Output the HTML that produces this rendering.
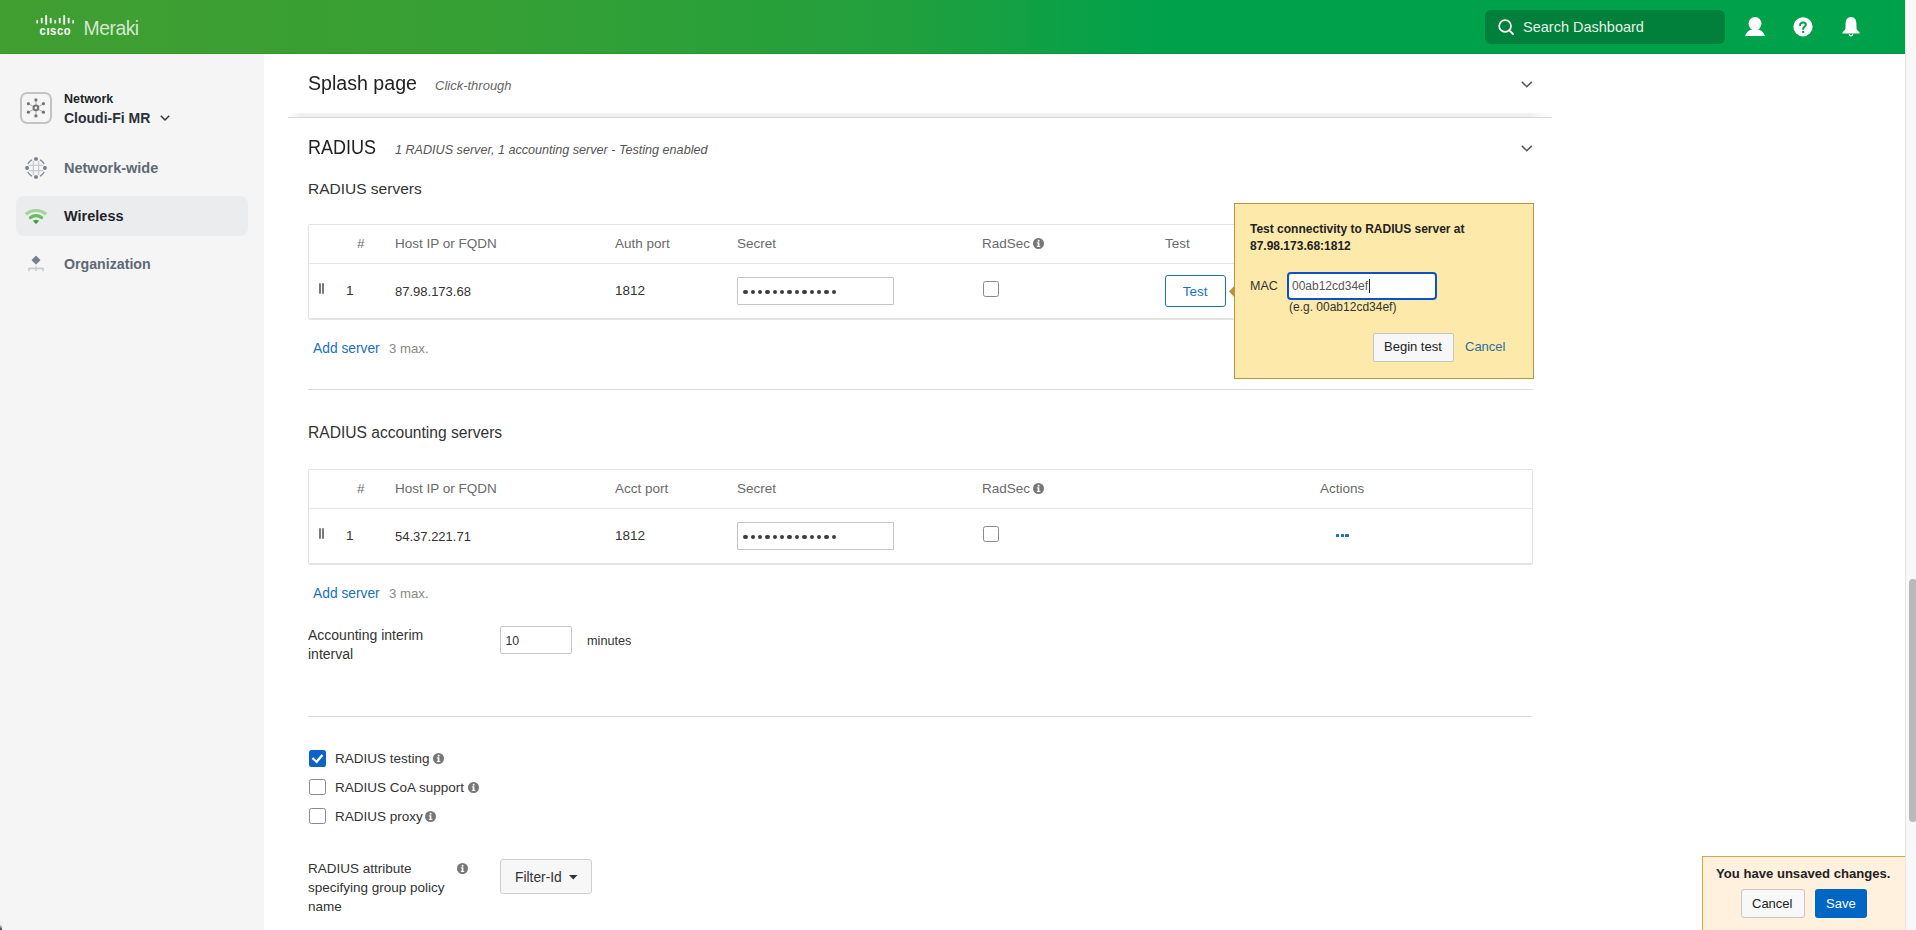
<!DOCTYPE html>
<html><head><meta charset="utf-8"><style>
*{box-sizing:border-box;margin:0;padding:0}
html,body{width:1916px;height:930px;overflow:hidden;background:#fff;font-family:"Liberation Sans",sans-serif;color:#222}
.abs{position:absolute}
#hdr{position:absolute;left:0;top:0;width:1905px;height:54px;background:linear-gradient(90deg,#419e31 0%,#36a034 25%,#22a03d 47%,#00a14b 61%,#00a14b 100%);border-bottom:1px solid rgba(0,60,0,0.09)}
#side{position:absolute;left:0;top:54px;width:264px;height:876px;background:#f5f5f5}
#scroll{position:absolute;left:1905px;top:0;width:11px;height:930px;background:#f8f8f8;border-left:1px solid #e6e6e6}
#thumb{position:absolute;left:1909px;top:579px;width:8px;height:242.5px;border-radius:4px;background:#b9b9b9}
.t{position:absolute;white-space:nowrap;line-height:1}
.hr{position:absolute;height:1px;background:#dcdcdc}
</style></head><body>

<div id="hdr">
 <svg class="abs" style="left:35.7px;top:14px" width="40" height="22" viewBox="0 0 40 22">
  <g fill="#fff">
   <rect x="0.3" y="6" width="1.8" height="3.6" rx="0.9"/>
   <rect x="4.8" y="3.7" width="1.8" height="5.8" rx="0.9"/>
   <rect x="9.3" y="1" width="1.8" height="9.8" rx="0.9"/>
   <rect x="13.8" y="3.7" width="1.8" height="5.8" rx="0.9"/>
   <rect x="18.3" y="6" width="1.8" height="3.6" rx="0.9"/>
   <rect x="22.8" y="3.7" width="1.8" height="5.8" rx="0.9"/>
   <rect x="27.3" y="1" width="1.8" height="9.8" rx="0.9"/>
   <rect x="31.8" y="3.7" width="1.8" height="5.8" rx="0.9"/>
   <rect x="36.3" y="6" width="1.8" height="3.6" rx="0.9"/>
  </g>
  <text x="3.6" y="17.3" transform="scale(1,1.2)" font-family="Liberation Sans" font-weight="bold" font-size="11.2" textLength="31" lengthAdjust="spacing" fill="#fff">c&#305;sco</text>
 </svg>
 <div class="t" style="left:83.5px;top:19px;font-size:19.4px;letter-spacing:-0.5px;color:rgba(255,255,255,0.78)">Meraki</div>
 <div class="abs" style="left:1485px;top:10px;width:240px;height:34px;border-radius:6px;background:#00803a"></div>
 <svg class="abs" style="left:1497px;top:18px" width="18" height="18" viewBox="0 0 18 18"><circle cx="8.1" cy="8" r="5.9" fill="none" stroke="#fff" stroke-width="1.7"/><path d="M12.3 12.3 L16 16" stroke="#fff" stroke-width="1.8" stroke-linecap="round"/></svg>
 <div class="t" style="left:1523px;top:20px;font-size:14.5px;color:#e6f2e8">Search Dashboard</div>
 <svg class="abs" style="left:1744px;top:16px" width="22" height="22" viewBox="0 0 22 22"><circle cx="11" cy="7.6" r="6.5" fill="#fff"/><path d="M1 20 C2.5 15.5 6.5 13 11 13 C15.5 13 19.5 15.5 21 20 Z" fill="#fff"/><path d="M3 13.6 C5.5 12 8 11.5 11 11.5" fill="none"/></svg>
 <svg class="abs" style="left:1792px;top:16px" width="22" height="22" viewBox="0 0 22 22"><circle cx="11" cy="10.8" r="9.6" fill="#fff"/><path d="M8.1 9.2 C8.1 7.3 9.4 6.6 11 6.6 C12.7 6.6 13.8 7.5 13.8 8.9 C13.8 10.7 11.2 10.8 11.2 12.7 L11.2 12.9" fill="none" stroke="#00a14b" stroke-width="2" stroke-linecap="round"/><rect x="10.1" y="14.9" width="2.1" height="2" fill="#00a14b"/></svg>
 <svg class="abs" style="left:1840px;top:16px" width="22" height="22" viewBox="0 0 22 22"><path d="M11 1 C7.2 1 5.6 4.2 5.6 8 L5.4 13.3 L2.6 16.3 C2.1 16.9 2.4 17.6 3.2 17.6 L18.8 17.6 C19.6 17.6 19.9 16.9 19.4 16.3 L16.6 13.3 L16.4 8 C16.4 4.2 14.8 1 11 1 Z" fill="#fff"/><path d="M9.2 18.2 C9.4 19.4 10.1 19.9 11 19.9 C11.9 19.9 12.6 19.4 12.8 18.2" fill="none" stroke="#fff" stroke-width="1.2"/></svg>
</div>


<div id="side">
 <div class="abs" style="left:20px;top:38px;width:32px;height:32px;border:2px solid #c3c3c3;border-radius:7px"></div>
 <svg class="abs" style="left:24px;top:42px" width="24" height="24" viewBox="0 0 24 24">
  <g stroke="#9a9a9a" stroke-width="0.8"><path d="M12 4V20M4.5 7.8L19.5 16.2M4.5 16.2L19.5 7.8"/></g>
  <circle cx="11.9" cy="11.9" r="2.3" fill="#f5f5f5" stroke="#747474" stroke-width="2"/>
  <g fill="#747474"><circle cx="11.9" cy="3.9" r="1.6"/><circle cx="11.9" cy="19.9" r="1.6"/><circle cx="4.4" cy="7.7" r="1.6"/><circle cx="19.4" cy="7.7" r="1.6"/><circle cx="4.4" cy="16.2" r="1.6"/><circle cx="19.4" cy="16.2" r="1.6"/></g>
 </svg>
 <div class="t" style="left:64px;top:39px;font-size:12.5px;font-weight:bold;color:#202428">Network</div>
 <div class="t" style="left:64px;top:57px;font-size:14px;font-weight:bold;color:#2b3138">Cloudi-Fi MR</div>
 <svg class="abs" style="left:159px;top:60px" width="12" height="8" viewBox="0 0 12 8"><path d="M1.8 1.8L6 6L10.2 1.8" fill="none" stroke="#333" stroke-width="1.5"/></svg>
 <svg class="abs" style="left:24px;top:102px" width="24" height="24" viewBox="0 0 24 24">
  <g fill="none" stroke="#c6cad0" stroke-width="1.3"><path d="M9.4 5V19M14.6 5V19M5 9.4H19M5 14.6H19"/></g>
  <g fill="none" stroke="#858c94" stroke-width="1.5" stroke-linecap="round">
   <path d="M4.2 7.5 A9 9 0 0 1 7.5 4.2 M16.5 4.2 A9 9 0 0 1 19.8 7.5 M19.8 16.5 A9 9 0 0 1 16.5 19.8 M7.5 19.8 A9 9 0 0 1 4.2 16.5"/>
  </g>
  <g fill="#7a828b"><rect x="10.1" y="1.2" width="3.8" height="3.6" rx="1.4"/><rect x="10.1" y="19.2" width="3.8" height="3.6" rx="1.4"/><rect x="1.3" y="10.1" width="3.6" height="3.8" rx="1.4"/><rect x="19.1" y="10.1" width="3.6" height="3.8" rx="1.4"/></g>
 </svg>
 <div class="t" style="left:64px;top:107px;font-size:14.5px;font-weight:bold;color:#5f6973">Network-wide</div>
 <div class="abs" style="left:16px;top:142px;width:232px;height:40px;border-radius:8px;background:#ebecee"></div>
 <svg class="abs" style="left:24px;top:150px" width="24" height="24" viewBox="0 0 24 24">
  <path d="M1.9 10.24 A15.5 15.5 0 0 1 22.1 10.24" fill="none" stroke="#a3d39a" stroke-width="3.2"/>
  <path d="M6.4 13.6 A10.1 10.1 0 0 1 17.6 13.6" fill="none" stroke="#6abd5e" stroke-width="3.2" stroke-linecap="round"/>
  <path d="M12 19.7 L9.4 16.8 A7 7 0 0 1 14.6 16.8 Z" fill="#3a9f32" stroke="#3a9f32" stroke-width="0.8" stroke-linejoin="round"/>
 </svg>
 <div class="t" style="left:64px;top:155px;font-size:14.5px;font-weight:bold;color:#1f2328">Wireless</div>
 <svg class="abs" style="left:24px;top:196px" width="24" height="24" viewBox="0 0 24 24">
  <path d="M12 5.5L16.2 9.7Q16.6 10.1 16.2 10.5L12.4 14.3Q12 14.7 11.6 14.3L7.8 10.5Q7.4 10.1 7.8 9.7L11.6 5.9Q12 5.5 12.4 5.9Z" fill="#78808a"/>
  <g fill="#c6cbd0"><rect x="11.3" y="16.2" width="1.5" height="2"/><rect x="4.2" y="17.6" width="15.6" height="1.7"/><rect x="4.2" y="19" width="1.6" height="2.1"/><rect x="11.3" y="19" width="1.5" height="2.1"/><rect x="18.2" y="19" width="1.6" height="2.1"/></g>
 </svg>
 <div class="t" style="left:64px;top:203px;font-size:14.2px;font-weight:bold;color:#5f6973">Organization</div>
</div>

<div class="t" style="left:308px;top:73px;font-size:20px;color:#222;transform:scaleX(0.98);transform-origin:0 0">Splash page</div><div class="t" style="left:435px;top:79px;font-size:13px;color:#666;font-style:italic">Click-through</div><svg class="abs" style="left:1520px;top:79.5px" width="14" height="9" viewBox="0 0 14 9"><path d="M1.9 1.9L6.8 6.8L11.7 1.9" fill="none" stroke="#555" stroke-width="1.5"/></svg><div class="abs" style="left:288px;top:112px;width:1264px;height:5px;background:linear-gradient(180deg,rgba(0,0,0,0) 0%,rgba(0,0,0,0.075) 55%,rgba(0,0,0,0.05) 100%);-webkit-mask-image:linear-gradient(90deg,transparent 0,#000 12px,#000 1240px,transparent 1264px)"></div><div class="hr" style="left:288px;top:117px;width:1264px;background:#d8d8d8"></div><div class="t" style="left:308px;top:137px;font-size:20px;color:#222;transform:scaleX(0.9);transform-origin:0 0">RADIUS</div><div class="t" style="left:395px;top:144px;font-size:12.6px;color:#555;font-style:italic">1 RADIUS server, 1 accounting server - Testing enabled</div><svg class="abs" style="left:1520px;top:143.5px" width="14" height="9" viewBox="0 0 14 9"><path d="M1.9 1.9L6.8 6.8L11.7 1.9" fill="none" stroke="#555" stroke-width="1.5"/></svg><div class="t" style="left:308px;top:181px;font-size:15.5px;color:#333;">RADIUS servers</div><div class="abs" style="left:308px;top:224px;width:1225px;height:96px;border:1px solid #e3e3e3;border-bottom:2px solid #e4e4e4;border-radius:2px"></div><div class="hr" style="left:309px;top:263px;width:1223px;background:#e6e6e6"></div><div class="t" style="left:357px;top:237px;font-size:13.5px;color:#6a6a6a;">#</div><div class="t" style="left:395px;top:237px;font-size:13.5px;color:#6a6a6a;">Host IP or FQDN</div><div class="t" style="left:615px;top:237px;font-size:13.5px;color:#6a6a6a;">Auth port</div><div class="t" style="left:737px;top:237px;font-size:13.5px;color:#6a6a6a;">Secret</div><div class="t" style="left:982px;top:237px;font-size:13.5px;color:#6a6a6a;">RadSec</div><div class="t" style="left:1165px;top:237px;font-size:13.5px;color:#6a6a6a;">Test</div><svg class="abs" style="left:1033px;top:238px" width="11" height="11" viewBox="0 0 11 11"><circle cx="5.5" cy="5.5" r="5.5" fill="#777"/><rect x="4.7" y="4.4" width="1.7" height="4.4" fill="#fff"/><rect x="3.8" y="4.4" width="1.7" height="1" fill="#fff"/><rect x="3.8" y="7.9" width="3.5" height="1" fill="#fff"/><circle cx="5.6" cy="2.8" r="1" fill="#fff"/></svg><div class="abs" style="left:319px;top:283px;width:1.8px;height:10.6px;border-radius:0.9px;background:#7a7a7a"></div><div class="abs" style="left:322.2px;top:283px;width:1.8px;height:10.6px;border-radius:0.9px;background:#7a7a7a"></div><div class="t" style="left:346px;top:284px;font-size:13.5px;color:#333;">1</div><div class="t" style="left:395px;top:284.7px;font-size:13px;color:#333;">87.98.173.68</div><div class="t" style="left:615px;top:284px;font-size:13.5px;color:#333;">1812</div><div class="abs" style="left:737px;top:277px;width:157px;height:28px;border:1px solid #c4c4c4;border-radius:1px;background:#fff"></div><div class="abs" style="left:743.20px;top:289.8px;width:4.4px;height:4.4px;border-radius:2.2px;background:#3d3d3d"></div><div class="abs" style="left:750.57px;top:289.8px;width:4.4px;height:4.4px;border-radius:2.2px;background:#3d3d3d"></div><div class="abs" style="left:757.94px;top:289.8px;width:4.4px;height:4.4px;border-radius:2.2px;background:#3d3d3d"></div><div class="abs" style="left:765.31px;top:289.8px;width:4.4px;height:4.4px;border-radius:2.2px;background:#3d3d3d"></div><div class="abs" style="left:772.68px;top:289.8px;width:4.4px;height:4.4px;border-radius:2.2px;background:#3d3d3d"></div><div class="abs" style="left:780.05px;top:289.8px;width:4.4px;height:4.4px;border-radius:2.2px;background:#3d3d3d"></div><div class="abs" style="left:787.42px;top:289.8px;width:4.4px;height:4.4px;border-radius:2.2px;background:#3d3d3d"></div><div class="abs" style="left:794.79px;top:289.8px;width:4.4px;height:4.4px;border-radius:2.2px;background:#3d3d3d"></div><div class="abs" style="left:802.16px;top:289.8px;width:4.4px;height:4.4px;border-radius:2.2px;background:#3d3d3d"></div><div class="abs" style="left:809.53px;top:289.8px;width:4.4px;height:4.4px;border-radius:2.2px;background:#3d3d3d"></div><div class="abs" style="left:816.90px;top:289.8px;width:4.4px;height:4.4px;border-radius:2.2px;background:#3d3d3d"></div><div class="abs" style="left:824.27px;top:289.8px;width:4.4px;height:4.4px;border-radius:2.2px;background:#3d3d3d"></div><div class="abs" style="left:831.64px;top:289.8px;width:4.4px;height:4.4px;border-radius:2.2px;background:#3d3d3d"></div><div class="abs" style="left:983px;top:281px;width:16px;height:16px;border:1px solid #8a8a8a;border-radius:2.5px;background:#fff"></div><div class="abs" style="left:1165px;top:275px;width:61px;height:32px;border:1.5px solid #1a6fc0;border-radius:3px;background:#fff"></div><div class="t" style="left:1182.7px;top:285px;font-size:13.5px;color:#1a6fc0;">Test</div><div class="t" style="left:313px;top:342px;font-size:13.8px;color:#1a6fc0;">Add server</div><div class="t" style="left:389px;top:341.5px;font-size:13.2px;color:#888;">3 max.</div><div class="hr" style="left:308px;top:389px;width:1225px;background:#dcdcdc"></div><div class="t" style="left:308px;top:425px;font-size:15.6px;color:#333;">RADIUS accounting servers</div><div class="abs" style="left:308px;top:469px;width:1225px;height:96px;border:1px solid #e3e3e3;border-bottom:2px solid #e4e4e4;border-radius:2px"></div><div class="hr" style="left:309px;top:508px;width:1223px;background:#e6e6e6"></div><div class="t" style="left:357px;top:482px;font-size:13.5px;color:#6a6a6a;">#</div><div class="t" style="left:395px;top:482px;font-size:13.5px;color:#6a6a6a;">Host IP or FQDN</div><div class="t" style="left:615px;top:482px;font-size:13.5px;color:#6a6a6a;">Acct port</div><div class="t" style="left:737px;top:482px;font-size:13.5px;color:#6a6a6a;">Secret</div><div class="t" style="left:982px;top:482px;font-size:13.5px;color:#6a6a6a;">RadSec</div><div class="t" style="left:1320px;top:482px;font-size:13.5px;color:#6a6a6a;">Actions</div><svg class="abs" style="left:1033px;top:483px" width="11" height="11" viewBox="0 0 11 11"><circle cx="5.5" cy="5.5" r="5.5" fill="#777"/><rect x="4.7" y="4.4" width="1.7" height="4.4" fill="#fff"/><rect x="3.8" y="4.4" width="1.7" height="1" fill="#fff"/><rect x="3.8" y="7.9" width="3.5" height="1" fill="#fff"/><circle cx="5.6" cy="2.8" r="1" fill="#fff"/></svg><div class="abs" style="left:319px;top:528px;width:1.8px;height:10.6px;border-radius:0.9px;background:#7a7a7a"></div><div class="abs" style="left:322.2px;top:528px;width:1.8px;height:10.6px;border-radius:0.9px;background:#7a7a7a"></div><div class="t" style="left:346px;top:529px;font-size:13.5px;color:#333;">1</div><div class="t" style="left:395px;top:529.7px;font-size:13px;color:#333;">54.37.221.71</div><div class="t" style="left:615px;top:529px;font-size:13.5px;color:#333;">1812</div><div class="abs" style="left:737px;top:522px;width:157px;height:28px;border:1px solid #c4c4c4;border-radius:1px;background:#fff"></div><div class="abs" style="left:743.20px;top:534.8px;width:4.4px;height:4.4px;border-radius:2.2px;background:#3d3d3d"></div><div class="abs" style="left:750.57px;top:534.8px;width:4.4px;height:4.4px;border-radius:2.2px;background:#3d3d3d"></div><div class="abs" style="left:757.94px;top:534.8px;width:4.4px;height:4.4px;border-radius:2.2px;background:#3d3d3d"></div><div class="abs" style="left:765.31px;top:534.8px;width:4.4px;height:4.4px;border-radius:2.2px;background:#3d3d3d"></div><div class="abs" style="left:772.68px;top:534.8px;width:4.4px;height:4.4px;border-radius:2.2px;background:#3d3d3d"></div><div class="abs" style="left:780.05px;top:534.8px;width:4.4px;height:4.4px;border-radius:2.2px;background:#3d3d3d"></div><div class="abs" style="left:787.42px;top:534.8px;width:4.4px;height:4.4px;border-radius:2.2px;background:#3d3d3d"></div><div class="abs" style="left:794.79px;top:534.8px;width:4.4px;height:4.4px;border-radius:2.2px;background:#3d3d3d"></div><div class="abs" style="left:802.16px;top:534.8px;width:4.4px;height:4.4px;border-radius:2.2px;background:#3d3d3d"></div><div class="abs" style="left:809.53px;top:534.8px;width:4.4px;height:4.4px;border-radius:2.2px;background:#3d3d3d"></div><div class="abs" style="left:816.90px;top:534.8px;width:4.4px;height:4.4px;border-radius:2.2px;background:#3d3d3d"></div><div class="abs" style="left:824.27px;top:534.8px;width:4.4px;height:4.4px;border-radius:2.2px;background:#3d3d3d"></div><div class="abs" style="left:831.64px;top:534.8px;width:4.4px;height:4.4px;border-radius:2.2px;background:#3d3d3d"></div><div class="abs" style="left:983px;top:526px;width:16px;height:16px;border:1px solid #8a8a8a;border-radius:2.5px;background:#fff"></div><div class="abs" style="left:1336.0px;top:533.5px;width:3.4px;height:3.4px;border-radius:0.6px;background:#1a6fc0"></div><div class="abs" style="left:1340.6px;top:533.5px;width:3.4px;height:3.4px;border-radius:0.6px;background:#1a6fc0"></div><div class="abs" style="left:1345.2px;top:533.5px;width:3.4px;height:3.4px;border-radius:0.6px;background:#1a6fc0"></div><div class="t" style="left:313px;top:587px;font-size:13.8px;color:#1a6fc0;">Add server</div><div class="t" style="left:389px;top:586.5px;font-size:13.2px;color:#888;">3 max.</div><div class="t" style="left:308px;top:626px;font-size:14px;color:#333;line-height:19px;white-space:normal;width:150px">Accounting interim interval</div><div class="abs" style="left:500px;top:626px;width:72px;height:28px;border:1px solid #c8c8c8;border-radius:2px"></div><div class="t" style="left:505.5px;top:635px;font-size:12.3px;color:#333;">10</div><div class="t" style="left:587px;top:634.5px;font-size:12.7px;color:#333;">minutes</div><div class="hr" style="left:308px;top:716px;width:1225px;background:#dcdcdc"></div><div class="abs" style="left:309px;top:750px;width:17px;height:16.5px;border-radius:2.5px;background:#0b63c5"></div><svg class="abs" style="left:309px;top:750px" width="17" height="17" viewBox="0 0 17 17"><path d="M3.4 8L7.6 11.8L13.4 5" fill="none" stroke="#fff" stroke-width="2.3"/></svg><div class="t" style="left:335px;top:752.3px;font-size:13.5px;color:#333;">RADIUS testing</div><svg class="abs" style="left:433px;top:753px" width="11" height="11" viewBox="0 0 11 11"><circle cx="5.5" cy="5.5" r="5.5" fill="#777"/><rect x="4.7" y="4.4" width="1.7" height="4.4" fill="#fff"/><rect x="3.8" y="4.4" width="1.7" height="1" fill="#fff"/><rect x="3.8" y="7.9" width="3.5" height="1" fill="#fff"/><circle cx="5.6" cy="2.8" r="1" fill="#fff"/></svg><div class="abs" style="left:309px;top:779px;width:17px;height:16px;border:1px solid #8a8a8a;border-radius:2.5px"></div><div class="t" style="left:335px;top:781.3px;font-size:13.5px;color:#333;">RADIUS CoA support</div><svg class="abs" style="left:468px;top:782px" width="11" height="11" viewBox="0 0 11 11"><circle cx="5.5" cy="5.5" r="5.5" fill="#777"/><rect x="4.7" y="4.4" width="1.7" height="4.4" fill="#fff"/><rect x="3.8" y="4.4" width="1.7" height="1" fill="#fff"/><rect x="3.8" y="7.9" width="3.5" height="1" fill="#fff"/><circle cx="5.6" cy="2.8" r="1" fill="#fff"/></svg><div class="abs" style="left:309px;top:807.5px;width:17px;height:16.5px;border:1px solid #8a8a8a;border-radius:2.5px"></div><div class="t" style="left:335px;top:810.3px;font-size:13.5px;color:#333;">RADIUS proxy</div><svg class="abs" style="left:425px;top:811px" width="11" height="11" viewBox="0 0 11 11"><circle cx="5.5" cy="5.5" r="5.5" fill="#777"/><rect x="4.7" y="4.4" width="1.7" height="4.4" fill="#fff"/><rect x="3.8" y="4.4" width="1.7" height="1" fill="#fff"/><rect x="3.8" y="7.9" width="3.5" height="1" fill="#fff"/><circle cx="5.6" cy="2.8" r="1" fill="#fff"/></svg><div class="t" style="left:308px;top:859px;font-size:13.5px;color:#333;line-height:19px;white-space:normal;width:160px">RADIUS attribute specifying group policy name</div><svg class="abs" style="left:457px;top:863px" width="11" height="11" viewBox="0 0 11 11"><circle cx="5.5" cy="5.5" r="5.5" fill="#777"/><rect x="4.7" y="4.4" width="1.7" height="4.4" fill="#fff"/><rect x="3.8" y="4.4" width="1.7" height="1" fill="#fff"/><rect x="3.8" y="7.9" width="3.5" height="1" fill="#fff"/><circle cx="5.6" cy="2.8" r="1" fill="#fff"/></svg><div class="abs" style="left:500px;top:859px;width:92px;height:35px;border:1px solid #cfcfcf;border-radius:3px;background:#f7f7f7"></div><div class="t" style="left:515px;top:870.5px;font-size:13.8px;color:#333;">Filter-Id</div><svg class="abs" style="left:569px;top:875px" width="8.5" height="4.5" viewBox="0 0 8.5 4.5"><path d="M0 0H8.5L4.25 4.5Z" fill="#333"/></svg>
<div class="abs" style="left:1234px;top:203px;width:300px;height:176px;background:#fde9a9;border:1px solid #b8953c"></div>
<svg class="abs" style="left:1228px;top:285px" width="7" height="13" viewBox="0 0 7 13"><path d="M7 0L1 6.5L7 13Z" fill="#b8953c"/></svg>
<div class="t" style="left:1250px;top:221px;font-size:12px;font-weight:bold;color:#222;line-height:17px">Test connectivity to RADIUS server at<br>87.98.173.68:1812</div>
<div class="t" style="left:1250px;top:280px;font-size:12.5px;color:#333">MAC</div>
<div class="abs" style="left:1287px;top:272px;width:150px;height:28px;border:2px solid #0b52c8;border-radius:4px;background:#fff"></div>
<div class="t" style="left:1292px;top:280px;font-size:12px;color:#555">00ab12cd34ef</div><div class="abs" style="left:1369px;top:279px;width:1px;height:14px;background:#222"></div>
<div class="t" style="left:1289px;top:301px;font-size:12px;color:#333">(e.g. 00ab12cd34ef)</div>
<div class="abs" style="left:1373px;top:333px;width:81px;height:29px;border:1px solid #c6c6c6;border-radius:2px;background:#f7f7f7"></div>
<div class="t" style="left:1384px;top:340px;font-size:13px;color:#222">Begin test</div>
<div class="t" style="left:1465px;top:340px;font-size:13px;color:#2e6da4">Cancel</div>

<div class="abs" style="left:1702px;top:856px;width:203px;height:74px;background:#fff1dd;border-top:1.5px solid #d6aa35;border-left:1.5px solid #d6aa35"></div>
<div class="t" style="left:1716px;top:867px;font-size:13.1px;font-weight:bold;color:#222">You have unsaved changes.</div>
<div class="abs" style="left:1741px;top:889px;width:64px;height:29px;border:1px solid #c6c6c6;border-radius:3px;background:#f8f8f8"></div>
<div class="t" style="left:1752px;top:897px;font-size:13px;color:#222">Cancel</div>
<div class="abs" style="left:1815px;top:889px;width:52px;height:29px;border-radius:3px;background:#0066c5"></div>
<div class="t" style="left:1826px;top:897px;font-size:13px;color:#fff">Save</div>

<div id="scroll"></div><div id="thumb"></div>
<div class="abs" style="left:0;top:924px;width:2px;height:6px;border-top-right-radius:2px 6px;background:linear-gradient(180deg,rgba(30,36,52,0),rgba(30,36,52,0.95))"></div>
</body></html>
